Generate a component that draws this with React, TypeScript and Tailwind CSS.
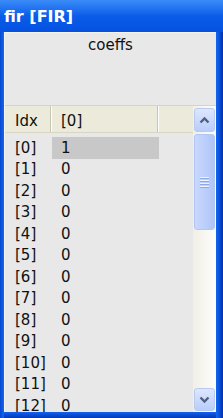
import React from "react";

const rows = ["1", "0", "0", "0", "0", "0", "0", "0", "0", "0", "0", "0", "0"];

function Chevron({ up }: { up?: boolean }) {
  return (
    <svg width="11" height="8" viewBox="0 0 11 8">
      <path
        d={up ? "M1.5 6.5 L5.5 2.5 L9.5 6.5" : "M1.5 1.5 L5.5 5.5 L9.5 1.5"}
        fill="none"
        stroke="#4d6185"
        strokeWidth="2.4"
      />
    </svg>
  );
}

export default function App() {
  return (
    <div
      className="w-[223px] h-[418px] flex flex-col overflow-hidden bg-[#0a55e6]"
      style={{ fontFamily: '"DejaVu Sans", Verdana, sans-serif' }}
    >
      <div className="h-[32px] shrink-0 flex items-center px-[4px] bg-gradient-to-b from-[#3b8cf7] via-[#0a5ce9] to-[#0550e0] text-white font-bold text-[16px] pt-[1px]">
        fir [FIR]
      </div>
      <div className="flex-1 flex min-h-0">
        <div className="w-[4px] shrink-0 bg-gradient-to-r from-[#0848d0] to-[#1466f0]" />
        <div className="flex-1 flex flex-col min-h-0 min-w-0">
          <div className="flex-1 flex flex-col min-h-0 bg-[#e8e8e8] border-l border-t border-[#f4f4f4] text-[#111111] text-[15px]">
            <div className="h-[72px] shrink-0 flex justify-center pt-[2px] leading-[20px]">coeffs</div>
            <div className="flex-1 flex min-h-0 border-t border-[#d4d4cc]">
              <div className="flex-1 flex flex-col min-w-0 overflow-hidden">
                <div className="h-[27px] shrink-0 flex bg-[#ebeadb] border-b border-[#d8d5c4]">
                  <div className="w-[46px] shrink-0 flex items-center pl-[10px] pt-[4px] border-r border-[#c7c5b2]">Idx</div>
                  <div className="w-[107px] shrink-0 flex items-center pl-[10px] pt-[4px] border-r border-[#c7c5b2] shadow-[inset_1px_0_0_#ffffff]">[0]</div>
                  <div className="flex-1 shadow-[inset_1px_0_0_#ffffff]" />
                </div>
                <div className="pt-[4px] flex flex-col">
                  {rows.map((v, i) => (
                    <div key={i} className="h-[21.5px] shrink-0 flex items-center">
                      <div className="w-[47px] shrink-0 pl-[10px]">[{i}]</div>
                      <div
                        className={
                          i === 0
                            ? "w-[107px] h-full flex items-center pl-[9px] bg-[#c8c8c8]"
                            : "w-[107px] h-full flex items-center pl-[9px]"
                        }
                      >
                        {v}
                      </div>
                    </div>
                  ))}
                </div>
              </div>
              <div className="w-[23px] shrink-0 flex flex-col bg-gradient-to-r from-[#f1efe6] to-[#fdfdfa] px-[1px] pt-[2px] pb-[1px]">
                <div className="h-[24px] shrink-0 rounded-[3px] border border-[#b8c9f2] bg-gradient-to-b from-[#dde7fe] to-[#b9cdfa] flex items-center justify-center">
                  <Chevron up />
                </div>
                <div className="h-[96px] shrink-0 mt-[2px] rounded-[3px] border border-[#b2c6f5] bg-gradient-to-r from-[#c9d8fd] via-[#bccffb] to-[#b0c5f6] flex items-center justify-center">
                  <div className="flex flex-col gap-[2px]">
                    <div className="w-[9px] h-[1px] bg-[#eef3ff] shadow-[0_1px_0_#8fa8e8]" />
                    <div className="w-[9px] h-[1px] bg-[#eef3ff] shadow-[0_1px_0_#8fa8e8]" />
                    <div className="w-[9px] h-[1px] bg-[#eef3ff] shadow-[0_1px_0_#8fa8e8]" />
                    <div className="w-[9px] h-[1px] bg-[#eef3ff] shadow-[0_1px_0_#8fa8e8]" />
                  </div>
                </div>
                <div className="flex-1" />
                <div className="h-[23px] shrink-0 rounded-[3px] border border-[#b8c9f2] bg-gradient-to-b from-[#dde7fe] to-[#b9cdfa] flex items-center justify-center">
                  <Chevron />
                </div>
              </div>
            </div>
          </div>
          <div className="h-[6px] shrink-0 bg-gradient-to-b from-[#1560ee] to-[#0339b8]" />
        </div>
        <div className="w-[7px] shrink-0 bg-gradient-to-r from-[#1566f0] via-[#0a4fd8] to-[#0330a8]" />
      </div>
    </div>
  );
}
